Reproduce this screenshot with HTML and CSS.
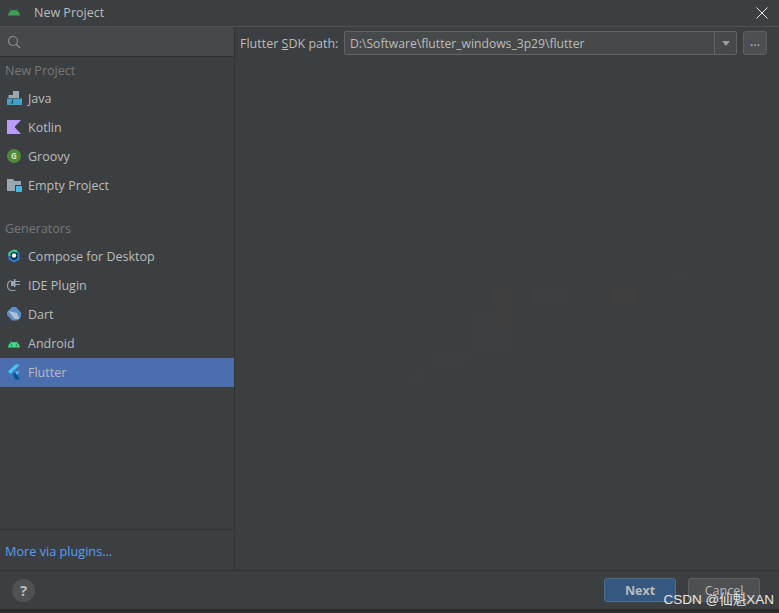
FILE: index.html
```html
<!DOCTYPE html>
<html lang="en">
<head>
<meta charset="utf-8">
<title>New Project</title>
<link rel="stylesheet" href="styles.css">
</head>
<body>
<div class="dialog">
  <header class="titlebar">
    <svg class="title-icon" width="12" height="8" viewBox="2 5 12 8"><path fill="#3b9f55" d="M2 12.500c.2-2.400 1.400-4 3-4.800L4 6l.5-.3 1.100 1.700A6 6 0 0 1 8 7a6 6 0 0 1 2.400.4l1.100-1.700.5.300-1 1.700c1.600.8 2.800 2.400 3 4.800z"/></svg>
    <span class="title-text">New Project</span>
    <svg class="close" width="12" height="12" viewBox="0 0 12 12"><path d="M.5.500l11 11M11.500.500l-11 11" stroke="#e8e8e8" stroke-width="1" fill="none"/></svg>
  </header>
  <div class="main">
    <aside class="sidebar">
      <div class="search">
        <svg width="14" height="14" viewBox="0 0 14 14"><circle cx="6" cy="6" r="4.500" stroke="#8b8e90" stroke-width="1.200" fill="none"/><path d="M9.300 9.300l3.700 3.700" stroke="#8b8e90" stroke-width="1.300"/></svg>
      </div>
      <div class="section-label first">New Project</div>
      <ul class="list">
        <li class="item"><svg width="16" height="16" viewBox="0 0 16 16"><path fill="#9aa7b0" d="M2.500 8V5H7V1h6v7z"/><path fill="#3c3f41" d="M5 4.200L7 2.200v2z"/><path fill="#40a0c8" d="M1 8.500h15V15H1z"/><path stroke="#25404e" fill="none" d="M6.500 9.500V13H4.500"/></svg><span>Java</span></li>
        <li class="item"><svg width="16" height="16" viewBox="0 0 16 16"><path fill="#b99bf8" d="M1 1h14L8.500 8 15 15H1z"/></svg><span>Kotlin</span></li>
        <li class="item"><svg width="16" height="16" viewBox="0 0 16 16"><circle cx="8" cy="8" r="7" fill="#4f8a3a"/><text class="g" x="8" y="11" text-anchor="middle">G</text></svg><span>Groovy</span></li>
        <li class="item"><svg width="16" height="16" viewBox="0 0 16 16"><path fill="#9aa7b0" d="M1 2h6l1.500 2H15v4H9v6H1z"/><path fill="#40b6e0" d="M10 9h6v6h-6z"/></svg><span>Empty Project</span></li>
      </ul>
      <div class="section-label">Generators</div>
      <ul class="list">
        <li class="item"><svg width="16" height="16" viewBox="0 0 16 16"><path fill="#2f7fd0" d="M8 1.500l5.500 3v7L8 14.500l-5.500-3v-7z"/><path fill="#3ddc84" d="M8 1.500l-5.500 3V8H8l3.500-5.500z"/><path fill="#122f3f" d="M4.500 5.300L8 3.400l3.500 1.900v5L8 12.200l-3.500-1.900z"/><circle cx="8" cy="7.500" r="2.200" fill="#fff"/></svg><span>Compose for Desktop</span></li>
        <li class="item"><svg width="16" height="16" viewBox="0 0 16 16"><path fill="none" stroke="#9aa7b0" stroke-width="1.100" d="M5 3.500A5.500 5.500 0 0 0 1.500 8.500a5 5 0 0 0 4 5h4"/><path fill="#9aa7b0" d="M5 4h3V2h1.500v2H14v1H9.500v2H14v1H9.500v2H8V9H5z"/></svg><span>IDE Plugin</span></li>
        <li class="item"><svg width="16" height="16" viewBox="0 0 16 16"><path fill="#5b8fc9" d="M1 6l5-5h4l5 5.500V11l-3.500 3.500H6L1 9z"/><path fill="#aebfd6" d="M2.500 5l8.500 2 2.500 6h-5z"/></svg><span>Dart</span></li>
        <li class="item"><svg width="16" height="16" viewBox="0 0 16 16"><path fill="#3ddc84" d="M2 12.500c.2-2.400 1.400-4 3-4.800L4 6l.5-.3 1.100 1.700A6 6 0 0 1 8 7a6 6 0 0 1 2.400.4l1.100-1.700.5.300-1 1.700c1.600.8 2.800 2.400 3 4.800z"/><circle cx="5.500" cy="10.300" r=".7" fill="#2b5c3d"/><circle cx="10.500" cy="10.300" r=".7" fill="#2b5c3d"/></svg><span>Android</span></li>
        <li class="item selected"><svg width="16" height="16" viewBox="0 0 16 16"><path fill="#47c5fb" d="M9.500 .5h4.500L4.500 10 2 7.500z"/><path fill="#47c5fb" d="M9.500 7.500H14l-5 5-2.300-2.200z"/><path fill="#00569e" d="M6.700 10.300L9 8l5 7.500H9.500z"/></svg><span>Flutter</span></li>
      </ul>
      <div class="sidebar-footer"><a class="link" href="#">More via plugins...</a></div>
    </aside>
    <section class="content">
      <div class="sdk-row">
        <label class="sdk-label">Flutter <u>S</u>DK path:</label>
        <div class="combo">
          <span class="combo-value">D:\Software\flutter_windows_3p29\flutter</span>
          <span class="combo-arrow"><i class="tri"></i></span>
        </div>
        <button class="browse">...</button>
      </div>
      <div class="tiles" aria-hidden="true">
        <i class="tile t1"></i><i class="tile t2"></i><i class="tile t3"></i><i class="tile t4"></i><i class="tile t5"></i><i class="tile t6"></i><i class="tile t7"></i><i class="tile t8"></i><i class="tile t9"></i>
      </div>
    </section>
  </div>
  <footer class="footer">
    <span class="help">?</span>
    <div class="actions">
      <button class="btn primary">Next</button>
      <button class="btn">Cancel</button>
    </div>
  </footer>
  <div class="bottom-strip"></div>
</div>
<div class="watermark">CSDN @仙魁XAN</div>
</body>
</html>
```
FILE: styles.css
```css
html, body { margin: 0; padding: 0; }
body {
  width: 779px;
  height: 613px;
  overflow: hidden;
  position: relative;
  background: #3c3f41;
  color: #bbbbbb;
  font-family: "Open Sans", "Noto Sans", sans-serif;
  font-size: 12.5px;
}
.dialog { display: flex; flex-direction: column; height: 613px; }
.titlebar {
  flex: none;
  display: flex;
  align-items: center;
  padding: 0 11px 1px 8px;
  height: 25px;
  border-bottom: 1px solid #515151;
  background: #3c3f41;
}
.title-icon { flex: none; margin-top: -2px; }
.title-text { margin-left: 14px; color: #bbbbbb; }
.close { margin-left: auto; }
.main { flex: 1; display: flex; min-height: 0; }
.sidebar {
  width: 234px;
  flex: none;
  display: flex;
  flex-direction: column;
  border-right: 1px solid #323232;
}
.search {
  height: 30px;
  flex: none;
  display: flex;
  align-items: center;
  padding: 1px 0 0 7px;
  background: #45494a;
  border-bottom: 1px solid #323232;
  box-sizing: border-box;
}
.section-label {
  color: #777777;
  height: 27px;
  line-height: 28px;
  padding-left: 5px;
  margin-top: 15px;
}
.section-label.first { margin-top: 0; }
.list { list-style: none; margin: 0; padding: 0; }
.item {
  height: 29px;
  display: flex;
  align-items: center;
  gap: 6px;
  padding-left: 6px;
}
.item svg { flex: none; margin-top: -1px; }
.item.selected { background: #4b6eaf; }
.g { font: bold 8px "Open Sans", sans-serif; fill: #cfe0c4; }
.sidebar-footer {
  margin-top: auto;
  height: 39px;
  display: flex;
  align-items: center;
  padding: 1px 0 0 5px;
  border-top: 1px solid #323232;
}
.link { color: #589df6; text-decoration: none; font-size: 12.7px; }
.content { flex: 1; position: relative; min-width: 0; }
.sdk-row {
  display: flex;
  align-items: center;
  height: 24px;
  margin-top: 4px;
  padding: 0 12px 0 5px;
}
.sdk-label { width: 104px; flex: none; white-space: nowrap; }
.combo {
  width: 393px;
  flex: none;
  height: 24px;
  box-sizing: border-box;
  display: flex;
  align-items: center;
  background: #45494a;
  border: 1px solid #646464;
  border-radius: 2px;
}
.combo-value { flex: 1; padding-left: 5px; color: #bbbbbb; font-size: 12.15px; }
.combo-arrow {
  width: 21px;
  height: 22px;
  border-left: 1px solid #646464;
  display: flex;
  align-items: center;
  justify-content: center;
}
.tri {
  width: 0;
  height: 0;
  border-left: 4px solid transparent;
  border-right: 4px solid transparent;
  border-top: 5px solid #9a9da1;
}
.browse {
  margin-left: 6px;
  width: 24px;
  height: 24px;
  padding: 0 0 4px;
  background: #4c5052;
  border: 1px solid #5e6060;
  border-radius: 3px;
  color: #bbbbbb;
  font: 12.5px "Open Sans", sans-serif;
}
.tiles { position: absolute; inset: 0; pointer-events: none; }
.tile { position: absolute; background: rgba(255,255,255,.009); }
.t1 { left: 257px; top: 261px; width: 22px; height: 20px; background: rgba(120,70,60,.07); }
.t2 { left: 235px; top: 281px; width: 20px; height: 21px; }
.t3 { left: 257px; top: 281px; width: 20px; height: 21px; background: rgba(120,70,60,.07); }
.t4 { left: 297px; top: 260px; width: 38px; height: 18px; }
.t5 { left: 377px; top: 260px; width: 24px; height: 18px; background: rgba(120,70,60,.07); }
.t6 { left: 235px; top: 303px; width: 40px; height: 25px; }
.t7 { left: 195px; top: 323px; width: 40px; height: 16px; }
.t8 { left: 175px; top: 343px; width: 15px; height: 18px; }
.t9 { left: 438px; top: 240px; width: 20px; height: 16px; }
.footer {
  flex: none;
  height: 38px;
  display: flex;
  align-items: center;
  padding: 0 19px 0 12px;
  border-top: 1px solid #323232;
}
.help {
  width: 23px;
  height: 23px;
  border-radius: 50%;
  background: #4e5254;
  color: #bbbbbb;
  font-weight: 700;
  font-size: 15px;
  display: flex;
  align-items: center;
  justify-content: center;
}
.actions { margin-left: auto; display: flex; gap: 12px; }
.btn {
  width: 72px;
  height: 24px;
  padding: 0;
  background: #4c5052;
  border: 1px solid #5e6060;
  border-radius: 3px;
  color: #bbbbbb;
  font: 12.5px "Open Sans", sans-serif;
}
.btn.primary { background: #365880; border-color: #4c708c; font-weight: 700; }
.bottom-strip { flex: none; height: 4px; background: #2b2b2b; }
.watermark {
  position: absolute;
  right: 5px;
  bottom: 5px;
  color: #e6e6e6;
  font-family: "Liberation Sans", "Noto Sans CJK SC", sans-serif;
  font-size: 13.5px;
  line-height: 16px;
  white-space: nowrap;
}
```
